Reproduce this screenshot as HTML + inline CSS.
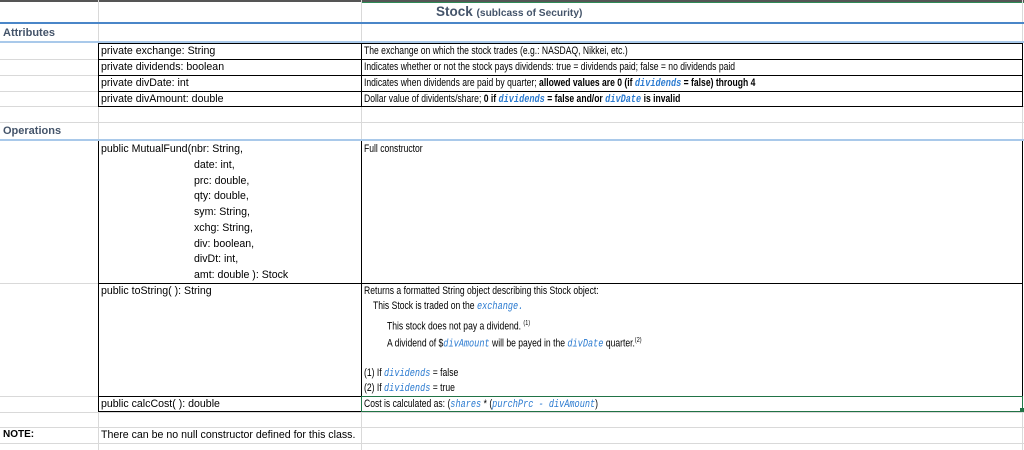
<!DOCTYPE html>
<html><head><style>
body{margin:0;width:1024px;height:450px;overflow:hidden;background:#fff;position:relative;font-family:"Liberation Sans",sans-serif;color:#000}
.a{position:absolute}
.h{position:absolute;height:1px;background:#d9d9d9}
.v{position:absolute;width:1px;background:#d9d9d9}
.k{background:#000}
.t{position:absolute;font-size:10.6px;white-space:nowrap;line-height:12px}
.c{position:absolute;font-size:11px;white-space:nowrap;line-height:12px;transform:scaleX(.78);transform-origin:0 50%}
.m{font-family:"Liberation Mono",monospace;font-style:italic;color:#2a7ad0;font-size:11px}
.b{font-weight:bold}
</style></head><body>
<div class="a" style="left:0;top:0;width:1024px;height:2px;background:#555"></div>
<div class="a" style="left:362px;top:2px;width:662px;height:1px;background:#2e8b57"></div>
<div class="v" style="left:98px;top:0;height:450px"></div>
<div class="v" style="left:361px;top:0;height:450px"></div>
<div class="v" style="left:1022px;top:0;height:450px"></div>
<div class="h" style="left:0;top:59px;width:98px"></div>
<div class="h" style="left:0;top:75px;width:98px"></div>
<div class="h" style="left:0;top:91px;width:98px"></div>
<div class="h" style="left:0;top:106px;width:1024px"></div>
<div class="h" style="left:0;top:122px;width:1024px"></div>
<div class="h" style="left:0;top:283px;width:98px"></div>
<div class="h" style="left:0;top:396px;width:98px"></div>
<div class="h" style="left:0;top:412px;width:1024px"></div>
<div class="h" style="left:0;top:427px;width:1024px"></div>
<div class="h" style="left:0;top:443px;width:1024px"></div>
<div class="a" style="left:0;top:22px;width:1024px;height:2px;background:#4a86c8"></div>
<div class="a" style="left:0;top:41px;width:1024px;height:2px;background:#a9c9ea"></div>
<div class="a" style="left:0;top:139px;width:1024px;height:2px;background:#a9c9ea"></div>
<div class="a k" style="left:98px;top:43px;width:925px;height:1px"></div>
<div class="a k" style="left:98px;top:59px;width:925px;height:1px"></div>
<div class="a k" style="left:98px;top:75px;width:925px;height:1px"></div>
<div class="a k" style="left:98px;top:91px;width:925px;height:1px"></div>
<div class="a k" style="left:98px;top:106px;width:925px;height:1px"></div>
<div class="a k" style="left:98px;top:43px;width:1px;height:64px"></div>
<div class="a k" style="left:361px;top:43px;width:1px;height:64px"></div>
<div class="a k" style="left:1022px;top:43px;width:1px;height:64px"></div>
<div class="a k" style="left:98px;top:141px;width:1px;height:271px"></div>
<div class="a k" style="left:361px;top:141px;width:1px;height:256px"></div>
<div class="a k" style="left:1022px;top:141px;width:1px;height:256px"></div>
<div class="a k" style="left:98px;top:283px;width:925px;height:1px"></div>
<div class="a k" style="left:98px;top:396px;width:925px;height:1px"></div>
<div class="a k" style="left:98px;top:411px;width:264px;height:1px"></div>
<div class="a" style="left:361px;top:396px;width:660px;height:14px;border:1px solid #217346"></div>
<div class="a" style="left:1020px;top:408px;width:4px;height:4px;background:#217346"></div>

<div class="a b" style="left:436px;top:4px;font-size:13.5px;color:#44546a;white-space:nowrap">Stock <span style="font-size:10.2px">(sublcass of Security)</span></div>
<div class="t b" style="left:3px;top:27px;font-size:11px;color:#44546a">Attributes</div>
<div class="t b" style="left:3px;top:125px;font-size:11px;color:#44546a">Operations</div>

<div class="t" style="left:101px;top:45px">private exchange: String</div>
<div class="t" style="left:101px;top:61px">private dividends: boolean</div>
<div class="t" style="left:101px;top:77px">private divDate: int</div>
<div class="t" style="left:101px;top:93px">private divAmount: double</div>

<div class="c" style="left:364px;top:45px">The exchange on which the stock trades (e.g.: NASDAQ, Nikkei, etc.)</div>
<div class="c" style="left:364px;top:61px">Indicates whether or not the stock pays dividends: true = dividends paid; false = no dividends paid</div>
<div class="c" style="left:364px;top:77px">Indicates when dividends are paid by quarter; <b>allowed values are 0 (if <span class="m">dividends</span> = false) through 4</b></div>
<div class="c" style="left:364px;top:93px">Dollar value of dividents/share; <b>0 if <span class="m">dividends</span> = false and/or <span class="m">divDate</span> is invalid</b></div>

<div class="t" style="left:101px;top:143px">public MutualFund(nbr: String,</div>
<div class="t" style="left:194px;top:159px">date: int,</div>
<div class="t" style="left:194px;top:175px">prc: double,</div>
<div class="t" style="left:194px;top:190px">qty: double,</div>
<div class="t" style="left:194px;top:206px">sym: String,</div>
<div class="t" style="left:194px;top:222px">xchg: String,</div>
<div class="t" style="left:194px;top:238px">div: boolean,</div>
<div class="t" style="left:194px;top:253px">divDt: int,</div>
<div class="t" style="left:194px;top:269px">amt: double ): Stock</div>
<div class="c" style="left:364px;top:143px">Full constructor</div>

<div class="t" style="left:101px;top:285px">public toString( ): String</div>
<div class="c" style="left:364px;top:285px">Returns a formatted String object describing this Stock object:</div>
<div class="c" style="left:373px;top:300px">This Stock is traded on the <span class="m">exchange.</span></div>
<div class="c" style="left:387px;top:318px">This stock does not pay a dividend. <sup style="font-size:7px">(1)</sup></div>
<div class="c" style="left:387px;top:335px">A dividend of $<span class="m">divAmount</span> will be payed in the <span class="m">divDate</span> quarter.<sup style="font-size:7px">(2)</sup></div>
<div class="c" style="left:364px;top:367px">(1) If <span class="m">dividends</span> = false</div>
<div class="c" style="left:364px;top:382px">(2) If <span class="m">dividends</span> = true</div>

<div class="t" style="left:101px;top:398px">public calcCost( ): double</div>
<div class="c" style="left:364px;top:398px">Cost is calculated as: (<span class="m">shares</span> * (<span class="m">purchPrc - divAmount</span>)</div>

<div class="t b" style="left:3px;top:429px;font-size:10px">NOTE:</div>
<div class="t" style="left:101px;top:429px">There can be no null constructor defined for this class.</div>
</body></html>
